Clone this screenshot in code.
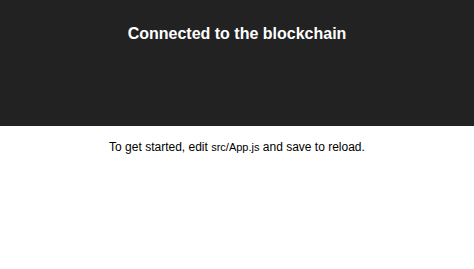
export default function App() {
  return (
    <div className="w-full text-center">
      <header className="h-[126px] bg-[#222222] pt-[23px] text-white">
        <h1 className="text-[16px] font-bold leading-[22px] font-['Liberation_Sans',Arial,sans-serif]">
          Connected to the blockchain
        </h1>
      </header>
      <p className="mt-[12px] text-[12px] leading-[18px] text-black font-['Liberation_Sans',Arial,sans-serif]">
        To get started, edit <code className="text-[11px] font-['Liberation_Sans',Arial,sans-serif]">src/App.js</code> and save to reload.
      </p>
    </div>
  );
}
